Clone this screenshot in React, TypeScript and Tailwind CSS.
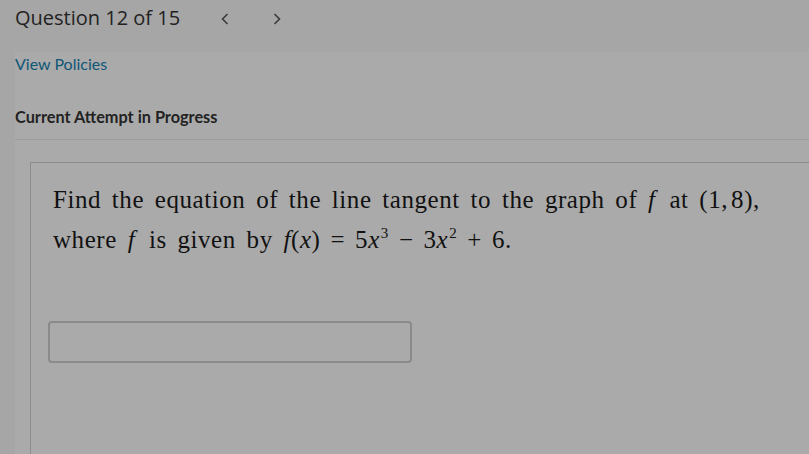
export default function App() {
  return (
    <div className="w-[809px] h-[454px] overflow-hidden bg-[#a6a6a6] flex flex-col">
      {/* Top navigation */}
      <div className="h-[52px] shrink-0 flex items-start pl-[15px] pt-[4px]">
        <span className="text-[20px] text-[#222] font-['Open_Sans',sans-serif] leading-[28px]">
          Question 12 of 15
        </span>
        <button className="ml-[39px] mt-[9px] w-[12px] h-[12px] flex items-center justify-center">
          <svg width="8" height="12" viewBox="0 0 8 12" fill="none" stroke="#3a3a3a" strokeWidth="1.6">
            <polyline points="6.5,1 1.5,6 6.5,11" />
          </svg>
        </button>
        <button className="ml-[40px] mt-[9px] w-[12px] h-[12px] flex items-center justify-center">
          <svg width="8" height="12" viewBox="0 0 8 12" fill="none" stroke="#3a3a3a" strokeWidth="1.6">
            <polyline points="1.5,1 6.5,6 1.5,11" />
          </svg>
        </button>
      </div>

      {/* Body */}
      <div className="flex-1 ml-[15px] bg-[#aaaaaa] flex flex-col font-['Lato',sans-serif]">
        <a className="text-[16px] text-[#0f5776] leading-[24px]">View Policies</a>
        <div className="mt-[29px] text-[16.3px] font-bold text-[#222] leading-[24px]">
          Current Attempt in Progress
        </div>
        <div className="mt-[10px] h-[1px] bg-[#9d9d9d]" />

        <div className="mt-[22px] ml-[15px] flex-1 border-l border-t border-[#8c8c8c] pl-[22px] pt-[17px]">
          <p className="font-['Liberation_Serif',serif] text-[25px] leading-[40px] text-[#111] tracking-[0.022em] [word-spacing:4px]">
            Find the equation of the line tangent to the graph of <i className="mr-[3px]">f</i> at (1,<span className="ml-[3px]">8),</span>
            <br />
            where <i className="mr-[3px]">f</i> is given by <i>f</i>(<i>x</i>)<span className="mx-[10px]">=</span>5<i>x</i>
            <sup className="text-[15px] ml-[1px] -top-[0.7em]">3</sup>
            <span className="mx-[10px]">−</span>3<i>x</i>
            <sup className="text-[15px] ml-[1px] -top-[0.7em]">2</sup>
            <span className="mx-[10px]">+</span>6.
          </p>
          <input
            className="mt-[61px] -ml-[5px] block w-[364px] h-[42px] rounded-[4px] border-2 border-[#8a8a8a] bg-transparent outline-none"
            type="text"
          />
        </div>
      </div>
    </div>
  );
}
